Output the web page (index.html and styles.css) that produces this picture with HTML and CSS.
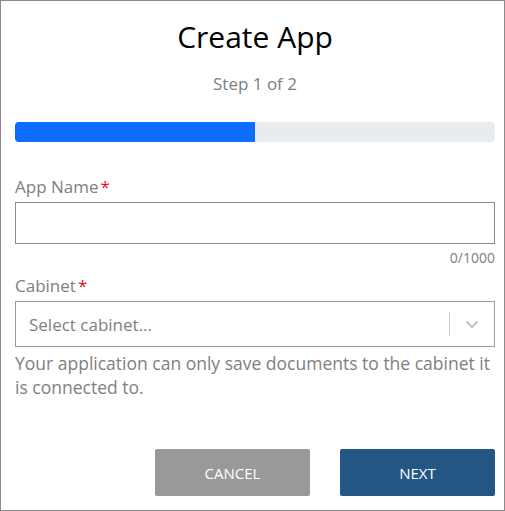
FILE: index.html
```html
<!DOCTYPE html>
<html lang="en">
<head>
<meta charset="utf-8">
<title>Create App</title>
<link rel="stylesheet" href="styles.css">
</head>
<body>
<div class="dialog">
  <h1 class="title">Create App</h1>
  <div class="step">Step 1 of 2</div>
  <div class="progress"><div class="progress-fill" style="width:50%"></div></div>

  <label class="label">App Name<span class="req">*</span></label>
  <div class="input"></div>
  <div class="counter">0/1000</div>

  <label class="label">Cabinet<span class="req">*</span></label>
  <div class="select">
    <span class="placeholder">Select cabinet...</span>
    <span class="sep"></span>
    <svg class="chev" width="14" height="9" viewBox="0 0 14 9"><path d="M1.5 1.5 L7 7 L12.5 1.5" fill="none" stroke="#c4c4c4" stroke-width="2.2"/></svg>
  </div>
  <p class="help">Your application can only save documents to the cabinet it is connected to.</p>

  <div class="actions">
    <button class="btn btn-cancel">CANCEL</button>
    <button class="btn btn-next">NEXT</button>
  </div>
</div>
</body>
</html>
```
FILE: styles.css
```css
html, body {
  margin: 0;
  padding: 0;
}
body {
  font-family: "Open Sans", "Liberation Sans", sans-serif;
  background: #fff;
}
.dialog {
  box-sizing: border-box;
  width: 505px;
  height: 511px;
  border: 1px solid #8a8a8a;
  padding: 16px 9px 0 14px;
  display: flex;
  flex-direction: column;
}
.title {
  margin: 0;
  font-size: 30px;
  font-weight: 400;
  line-height: 40px;
  text-align: center;
  color: #000;
}
.step {
  margin-top: 16px;
  font-size: 17px;
  line-height: 22px;
  text-align: center;
  color: #808080;
}
.progress {
  margin-top: 27px;
  height: 20px;
  border-radius: 4px;
  background: #e9ecef;
  overflow: hidden;
}
.progress-fill {
  height: 100%;
  background: #0d6efd;
}
.label {
  display: block;
  margin-top: 33px;
  font-size: 17px;
  line-height: 24px;
  color: #808080;
}
.label + .input { margin-top: 3px; }
.req {
  color: #e0102d;
  margin-left: 2px;
}
.input {
  height: 42px;
  box-sizing: border-box;
  border: 1px solid #8c8c8c;
}
.counter {
  margin-top: 5px;
  text-align: right;
  font-size: 14px;
  line-height: 18px;
  color: #808080;
}
.counter + .label { margin-top: 7px; }
.select {
  margin-top: 3px;
  height: 46px;
  box-sizing: border-box;
  border: 1px solid #9a9a9a;
  display: flex;
  align-items: center;
  padding-left: 13px;
}
.placeholder {
  flex: 1;
  font-size: 17px;
  color: #808080;
}
.sep {
  width: 1px;
  height: 24px;
  background: #cfcfcf;
}
.chev {
  margin: 0 15px 0 15px;
}
.help {
  margin: 4px 0 0;
  font-size: 17.5px;
  line-height: 24px;
  color: #808080;
}
.actions {
  margin-top: 50px;
  display: flex;
  justify-content: flex-end;
  gap: 30px;
}
.btn {
  width: 155px;
  height: 47px;
  border: 0;
  border-radius: 2px;
  color: #fff;
  font-family: "Open Sans", "Liberation Sans", sans-serif;
  font-size: 15px;
}
.btn-cancel { background: #999; }
.btn-next { background: #235684; }
```
